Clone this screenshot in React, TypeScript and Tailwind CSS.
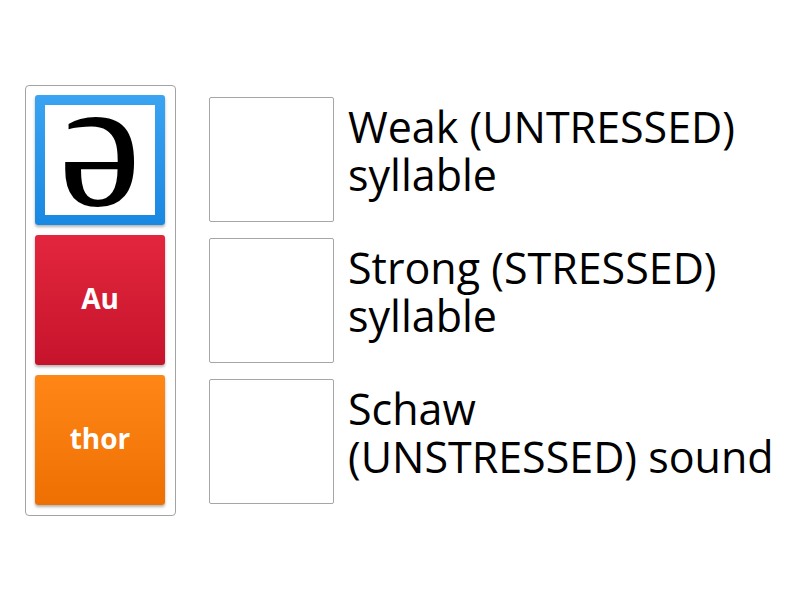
const cards = [
  { key: "schwa", kind: "schwa" },
  { key: "au", kind: "text", label: "Au", bg: "bg-gradient-to-b from-[#e3263d] to-[#c6132c]" },
  { key: "thor", kind: "text", label: "thor", bg: "bg-gradient-to-b from-[#ff8716] to-[#ee6f02]" },
];

const targets = [
  ["Weak (UNTRESSED)", "syllable"],
  ["Strong (STRESSED)", "syllable"],
  ["Schaw", "(UNSTRESSED) sound"],
];

export default function App() {
  return (
    <div className="w-[800px] h-[600px] bg-white font-['Open_Sans',sans-serif] text-black">
      <div className="flex items-start pt-[85px] pl-[25px]">
        <div className="flex flex-col gap-[10px] w-[151px] h-[431px] p-[9px] border border-[#a3a3a3] rounded-[4px]">
          {cards.map((c) =>
            c.kind === "schwa" ? (
              <div
                key={c.key}
                className="w-[130px] h-[130px] rounded-[3px] p-[10px] bg-gradient-to-b from-[#3aa4f2] to-[#1888e2] shadow-[0_2px_3px_rgba(0,0,0,0.3)]"
              >
                <div className="w-full h-full bg-white flex items-center justify-center">
                  <span className="font-['Liberation_Serif',serif] text-[186px] leading-none -translate-y-[18px]">ə</span>
                </div>
              </div>
            ) : (
              <div
                key={c.key}
                className={`w-[130px] h-[130px] rounded-[3px] flex items-center justify-center shadow-[0_2px_3px_rgba(0,0,0,0.3)] ${c.bg}`}
              >
                <span className="text-white font-bold text-[28px] leading-none -mt-[4px]">{c.label}</span>
              </div>
            )
          )}
        </div>
        <div className="flex flex-col gap-[16px] ml-[33px] mt-[12px]">
          {targets.map((lines, i) => (
            <div key={i} className="flex items-start">
              <div className="w-[125px] h-[125px] border border-[#a6a6a6] rounded-[2px] bg-white" />
              <div className="ml-[14px] mt-[6px] text-[43px] leading-[48px] text-black">
                {lines.map((l) => (
                  <div key={l}>{l}</div>
                ))}
              </div>
            </div>
          ))}
        </div>
      </div>
    </div>
  );
}
